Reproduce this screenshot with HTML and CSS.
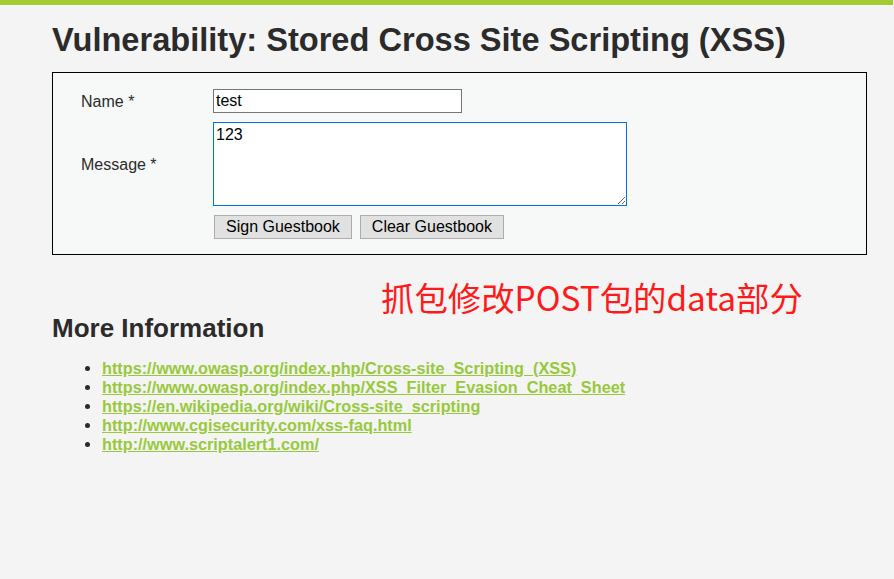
FILE: index.html
```html
<!DOCTYPE html>
<html>
<head>
<meta charset="utf-8">
<link rel="stylesheet" href="styles.css">
</head>
<body>
<div class="topbar"></div>
<div class="page">
  <h1 class="title">Vulnerability: Stored Cross Site Scripting (XSS)</h1>
  <div class="code-area">
    <form class="gb-form">
      <label class="lbl lbl-name">Name *</label>
      <div class="field"><input class="txt" type="text" value="test"></div>
      <label class="lbl lbl-msg">Message *</label>
      <div class="field"><textarea class="msg">123</textarea></div>
      <span></span>
      <div class="btns">
        <button type="button" class="btn">Sign Guestbook</button>
        <button type="button" class="btn">Clear Guestbook</button>
      </div>
    </form>
  </div>
  <div class="note">抓包修改POST包的data部分</div>
  <h2 class="more">More Information</h2>
  <ul class="links">
    <li><a href="#">https://www.owasp.org/index.php/Cross-site_Scripting_(XSS)</a></li>
    <li><a href="#">https://www.owasp.org/index.php/XSS_Filter_Evasion_Cheat_Sheet</a></li>
    <li><a href="#">https://en.wikipedia.org/wiki/Cross-site_scripting</a></li>
    <li><a href="#">http://www.cgisecurity.com/xss-faq.html</a></li>
    <li><a href="#">http://www.scriptalert1.com/</a></li>
  </ul>
</div>
</body>
</html>
```

FILE: styles.css
```css
html, body {
  margin: 0;
  padding: 0;
}
body {
  background: #f4f4f4;
  font-family: "Liberation Sans", Arial, sans-serif;
  color: #2b2b2b;
  width: 893px;
  min-height: 579px;
  position: relative;
}
.topbar {
  height: 5px;
  background: #a3cc33;
}
.page {
  padding: 0 26px 0 52px;
}
.title {
  margin: 0;
  padding-top: 16px;
  font-size: 32.6px;
  line-height: 38px;
  font-weight: bold;
  color: #2b2b2b;
  height: 51px;
  white-space: nowrap;
}
.code-area {
  border: 1px solid #000;
  background: #f7f8f8;
  padding: 16px 0 15px 28px;
}
.gb-form {
  display: grid;
  grid-template-columns: 132px auto;
  row-gap: 9px;
  align-items: center;
}
.lbl {
  font-size: 16px;
  color: #2b2b2b;
}
.lbl-name {
  padding-top: 2px;
}
.lbl-msg {
  padding-top: 1px;
}
.field {
  display: flex;
}
.txt {
  box-sizing: border-box;
  width: 249px;
  height: 24px;
  border: 1px solid #767676;
  background: #fff;
  font: 16px "Liberation Sans", Arial, sans-serif;
  color: #000;
  padding: 1px 2px;
  margin: 0;
  outline: none;
}
.msg {
  box-sizing: border-box;
  width: 414px;
  height: 84px;
  border: 1px solid #0078d7;
  background: #fff;
  font: 16px "Liberation Sans", Arial, sans-serif;
  color: #000;
  padding: 3px 2px;
  margin: 0;
  resize: both;
  outline: none;
}
.btns {
  display: flex;
  gap: 8px;
  padding-left: 1px;
}
.btn {
  height: 24px;
  border: 1px solid #adadad;
  background: #e1e1e1;
  font: 16px "Liberation Sans", Arial, sans-serif;
  color: #000;
  padding: 0 11px;
  margin: 0;
}
.note {
  position: absolute;
  left: 381px;
  top: 274px;
  font-family: "Noto Sans CJK SC", "Microsoft YaHei", sans-serif;
  font-size: 33.4px;
  line-height: 46px;
  color: #ff1a1a;
  white-space: nowrap;
}
.more {
  margin: 58px 0 0;
  font-size: 26px;
  line-height: 30px;
  font-weight: bold;
  color: #2b2b2b;
}
.links {
  margin: 16px 0 0;
  padding-left: 50px;
  font-size: 16.25px;
  line-height: 19px;
}
.links a {
  color: #98c93c;
  font-weight: bold;
  text-decoration: underline;
}
.links li::marker {
  color: #2b2b2b;
}
```
